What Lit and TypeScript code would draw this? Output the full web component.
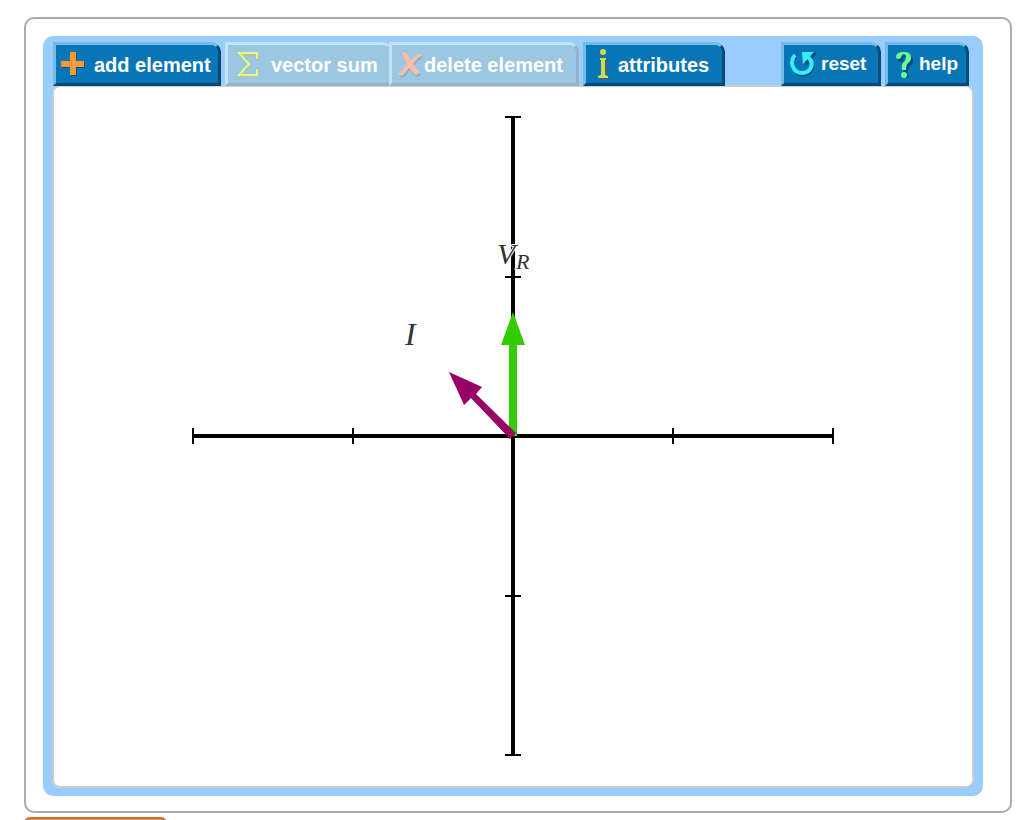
import { LitElement, html, css, svg } from "lit";
import { customElement } from "lit/decorators.js";

@customElement("phasor-plot")
class PhasorPlot extends LitElement {
  static styles = css`
    :host { display: block; }
    svg { display: block; width: 100%; height: auto; }
    .axis { stroke: #000; stroke-width: 4; }
    .tick { stroke: #000; stroke-width: 2; }
    .label {
      font-family: "Liberation Serif", serif;
      font-style: italic;
      font-size: 32px;
      fill: #333;
      stroke: #fff;
      stroke-width: 2;
      paint-order: stroke;
    }
    .voltage { font-size: 30px; }
    .sub { font-size: 22px; }
    .green { fill: #33cc00; }
    .purple { fill: #990066; }
  `;

  render() {
    const across = [-320, -160, 160, 320];
    const down = [-319, -159, 160, 319];
    return html`
      <svg viewBox="-459 -349 918 699" role="img" aria-label="V R, I">
        <path class="axis" d="M-320 0H320M0 -320V320" />
        ${across.map((x) => svg`<path class="tick" d="M${x} -8v16" />`)}
        ${down.map((y) => svg`<path class="tick" d="M-8 ${y}h16" />`)}
        <path class="green" d="M0 -124L12 -91H4V0H-4V-91H-12Z" />
        <path class="purple" d="M-64 -64L-31 -49L-37 -42L3 -3L-3 3L-42 -38L-49 -31Z" />
        <text class="label" x="-108" y="-91">I</text>
        <text class="label voltage" x="-16" y="-172">V<tspan class="sub" x="3" y="-167">R</tspan></text>
      </svg>
    `;
  }
}

const questionHook =
  "M1 9Q1 4 9 4Q16 4 16 9.500Q16 13 13 15Q11 17 11 22H7Q6 16 9 14Q11 12 11 9Q11 6 9 6Q6.500 6 6.500 8Q6 11 3.500 11Q1 11 1 9Z";
const cross =
  "M6 3Q9 1 11 4L15 10Q19 6 23 4L26 5Q20 9 17 14Q21 20 24 23L20 25Q16 22 13 18Q10 22 7 25Q4 27 2 24Q7 20 11 14Q8 9 6 3Z";

const icons = {
  add: html`<svg class="icon" width="28" height="28" viewBox="0 0 28 28" aria-hidden="true">
    <path d="M11 3h6v9h8v6h-8v8h-6v-8H2v-6h9z" fill="#064a75" opacity=".75" />
    <path d="M10 2h6v9h8v6h-8v8h-6v-8H1v-6h9z" fill="#ff9933" /></svg>`,
  sum: html`<svg class="icon" width="28" height="28" viewBox="0 0 28 28" aria-hidden="true">
    <path d="M23 10V5H5L15 15L5 26H23V20" fill="none" stroke="#c9b8a8" stroke-width="2" />
    <path d="M22 9V3H4L14 14L4 25H22V19" fill="none" stroke="#dcff80" stroke-width="2" /></svg>`,
  remove: html`<svg class="icon" width="28" height="28" viewBox="0 0 28 28" aria-hidden="true">
    <path d=${cross} transform="translate(1 2)" fill="#86b1c9" />
    <path d=${cross} fill="#ffbda8" /></svg>`,
  info: html`<svg class="icon" width="16" height="32" viewBox="0 0 16 32" aria-hidden="true">
    <path d="M6 11h6v17h2v3H4v-2h4V13H6z" fill="#4c6470" />
    <circle cx="8" cy="5" r="3" fill="#4c6470" />
    <circle cx="8" cy="4" r="3" fill="#cddc4c" />
    <path d="M5 10h6v2h-1v15l3 1v2H3v-2l3-1V12H5z" fill="#cddc4c" /></svg>`,
  reset: html`<svg class="icon" width="26" height="28" viewBox="0 0 26 28" aria-hidden="true">
    <path d="M6 8C0 15 4 26 13 26S26 15 19 10M14 5H24L17 14Z" fill="none" stroke="#064a75" stroke-width="3" />
    <path d="M5 6C-1 13 3 24 12 24S25 14 18 8" fill="none" stroke="#33eeff" stroke-width="4" />
    <path d="M12 3H24L13 15Z" fill="#33eeff" /></svg>`,
  help: html`<svg class="icon" width="20" height="30" viewBox="0 0 20 30" aria-hidden="true">
    <g fill="#064a75" transform="translate(2 3)"><path d=${questionHook} /><circle cx="9" cy="26" r="3" /></g>
    <g fill="#66ff99"><path d=${questionHook} /><circle cx="9" cy="27" r="3" /></g></svg>`,
};

@customElement("app-root")
class AppRoot extends LitElement {
  static styles = css`
    :host {
      display: block;
      height: 100vh;
      overflow: hidden;
      background: #fff;
      font-family: "Liberation Sans", Arial, sans-serif;
    }
    .frame {
      margin: 17px 20px 4px 24px;
      padding: 17px 27px 15px 17px;
      border: 2px solid #aaa;
      border-radius: 10px;
    }
    .panel {
      padding: 6px 9px 8px;
      border-radius: 10px;
      background: #99ccff;
    }
    .toolbar {
      position: relative;
      z-index: 1;
      display: flex;
      gap: 4px;
      padding: 0 5px 0 1px;
    }
    .tool {
      display: flex;
      align-items: center;
      box-sizing: border-box;
      height: 44px;
      margin: 0;
      padding: 0 8px 0 4px;
      border: 3px solid;
      border-color: #70bde6 #064a75 #064a75 #70bde6;
      border-top-right-radius: 10px;
      background: #0876b6;
      color: #fff;
      font: bold 20px/24px "Liberation Sans", Arial, sans-serif;
      white-space: nowrap;
    }
    .tool:disabled {
      border-color: #bfe2f5 #97b4c6 #97b4c6 #bfe2f5;
      background: #9cc7e0;
    }
    .tool span { padding-top: 2px; }
    .icon { display: block; flex: none; }
    .add { width: 168px; gap: 6px; }
    .sum { width: 168px; gap: 8px; padding-left: 7px; }
    .remove { width: 190px; margin-left: -8px; }
    .info { width: 142px; gap: 7px; padding-left: 9px; }
    .small { font-size: 19px; padding-bottom: 2px; }
    .reset { width: 100px; margin-left: auto; gap: 5px; padding-left: 6px; }
    .help { width: 84px; gap: 4px; padding-left: 7px; }
    .canvas {
      margin-top: -1px;
      overflow: hidden;
      border: 2px solid #ccc;
      border-radius: 8px;
      background: #fff;
    }
    .next {
      box-sizing: border-box;
      width: 143px;
      height: 32px;
      margin-left: 24px;
      border: 2px solid #c4713a;
      border-radius: 6px;
      background: #e8903f;
    }
  `;

  render() {
    return html`
      <main class="frame">
        <section class="panel">
          <div class="toolbar" role="toolbar">
            <button class="tool add">${icons.add}<span>add element</span></button>
            <button class="tool sum" disabled>${icons.sum}<span>vector sum</span></button>
            <button class="tool remove" disabled>${icons.remove}<span>delete element</span></button>
            <button class="tool info">${icons.info}<span>attributes</span></button>
            <button class="tool small reset">${icons.reset}<span>reset</span></button>
            <button class="tool small help">${icons.help}<span>help</span></button>
          </div>
          <div class="canvas"><phasor-plot></phasor-plot></div>
        </section>
      </main>
      <div class="next"></div>
    `;
  }
}
